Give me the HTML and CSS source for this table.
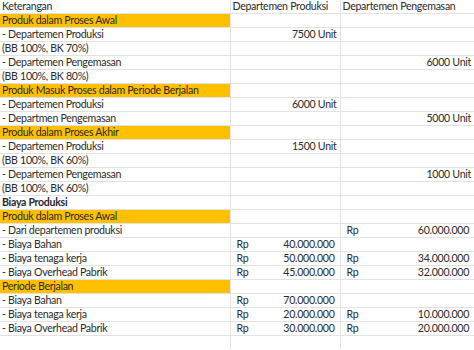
FILE: index.html
```html
<!DOCTYPE html>
<html>
<head>
<meta charset="utf-8">
<link rel="stylesheet" href="styles.css">
</head>
<body>
<table class="sheet">
  <colgroup><col class="c1"><col class="c2"><col class="c3"></colgroup>
  <tr><td>Keterangan</td><td>Departemen Produksi</td><td>Departemen Pengemasan</td></tr>
  <tr><td class="hl">Produk dalam Proses Awal</td><td></td><td></td></tr>
  <tr><td>- Departemen Produksi</td><td class="num">7500 Unit</td><td></td></tr>
  <tr><td>(BB 100%, BK 70%)</td><td></td><td></td></tr>
  <tr><td>- Departemen Pengemasan</td><td></td><td class="num">6000 Unit</td></tr>
  <tr><td>(BB 100%, BK 80%)</td><td></td><td></td></tr>
  <tr><td class="hl">Produk Masuk Proses dalam Periode Berjalan</td><td></td><td></td></tr>
  <tr><td>- Departemen Produksi</td><td class="num">6000 Unit</td><td></td></tr>
  <tr><td>- Departmen Pengemasan</td><td></td><td class="num">5000 Unit</td></tr>
  <tr><td class="hl">Produk dalam Proses Akhir</td><td></td><td></td></tr>
  <tr><td>- Departemen Produksi</td><td class="num">1500 Unit</td><td></td></tr>
  <tr><td>(BB 100%, BK 60%)</td><td></td><td></td></tr>
  <tr><td>- Departemen Pengemasan</td><td></td><td class="num">1000 Unit</td></tr>
  <tr><td>(BB 100%, BK 60%)</td><td></td><td></td></tr>
  <tr><td class="bold">Biaya Produksi</td><td></td><td></td></tr>
  <tr><td class="hl">Produk dalam Proses Awal</td><td></td><td></td></tr>
  <tr><td>- Dari departemen produksi</td><td></td><td><div class="money"><span>Rp</span><span>60.000.000</span></div></td></tr>
  <tr><td>- Biaya Bahan</td><td><div class="money"><span>Rp</span><span>40.000.000</span></div></td><td></td></tr>
  <tr><td>- Biaya tenaga kerja</td><td><div class="money"><span>Rp</span><span>50.000.000</span></div></td><td><div class="money"><span>Rp</span><span>34.000.000</span></div></td></tr>
  <tr><td>- Biaya Overhead Pabrik</td><td><div class="money"><span>Rp</span><span>45.000.000</span></div></td><td><div class="money"><span>Rp</span><span>32.000.000</span></div></td></tr>
  <tr><td class="hl">Periode Berjalan</td><td></td><td></td></tr>
  <tr><td>- Biaya Bahan</td><td><div class="money"><span>Rp</span><span>70.000.000</span></div></td><td></td></tr>
  <tr><td>- Biaya tenaga kerja</td><td><div class="money"><span>Rp</span><span>20.000.000</span></div></td><td><div class="money"><span>Rp</span><span>10.000.000</span></div></td></tr>
  <tr><td>- Biaya Overhead Pabrik</td><td><div class="money"><span>Rp</span><span>30.000.000</span></div></td><td><div class="money"><span>Rp</span><span>20.000.000</span></div></td></tr>
  <tr class="last"><td></td><td></td><td></td></tr>
</table>
</body>
</html>
```
FILE: styles.css
```css
html, body {
  margin: 0;
  padding: 0;
  background: #ffffff;
}
.sheet {
  border-collapse: collapse;
  table-layout: fixed;
  width: 474px;
  font-family: Lato, Roboto, "Liberation Sans", sans-serif;
  font-size: 10.6px;
  letter-spacing: -0.3px;
  color: #2a2a2a;
}
.c1 { width: 230px; }
.c2 { width: 110px; }
.c3 { width: 134px; }
.sheet td {
  height: 13px;
  padding: 0 3px 0 2px;
  border-bottom: 1px solid #e2e2e2;
  border-right: 1px solid #e2e2e2;
  white-space: nowrap;
  overflow: hidden;
  line-height: 13px;
  vertical-align: middle;
}
.sheet td:last-child { border-right: none; }
.sheet td.hl { background: #ffc000; }
.sheet td.bold { font-weight: bold; }
.sheet td.num { text-align: right; }
.money {
  display: flex;
  justify-content: space-between;
  padding-left: 4px;
  padding-right: 2px;
}
.sheet tr.last td { border-bottom: none; }
```
